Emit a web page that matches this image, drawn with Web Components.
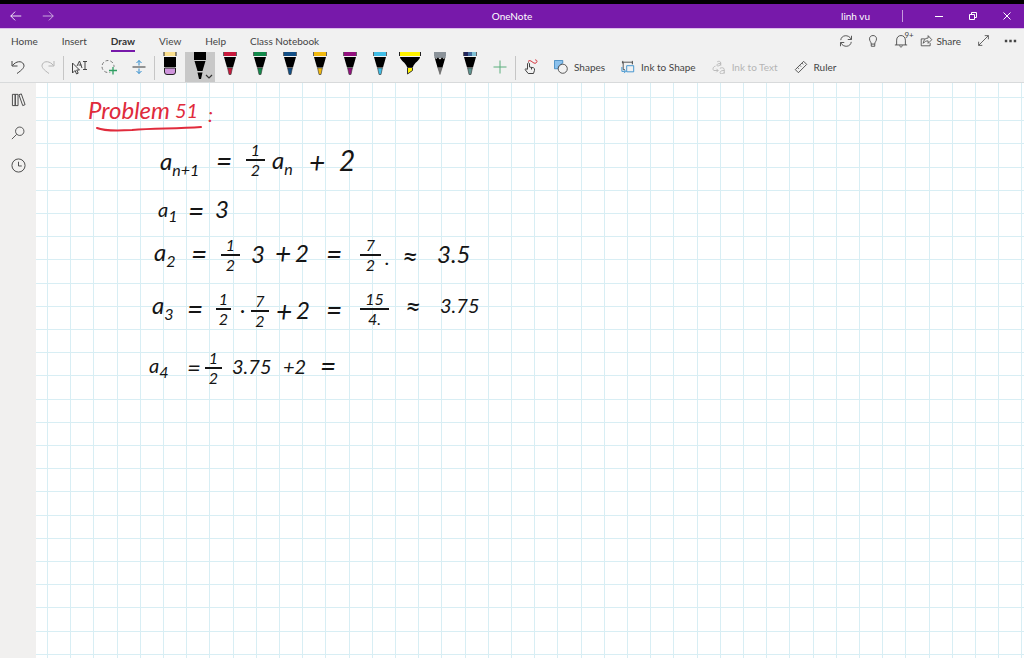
<!DOCTYPE html>
<html lang="en">
<head>
<meta charset="utf-8">
<title>OneNote</title>
<style>
  html, body { height: 100%; margin: 0; }
  body {
    font: 10px/14px Lato, "Open Sans", sans-serif;
    color: #444;
    background: #fff;
    overflow: hidden;
  }
</style>
</head>
<body>
<note-app>
  <title-bar slot="title" user="linh vu">OneNote</title-bar>
  <ribbon-tabs slot="tabs"></ribbon-tabs>
  <draw-toolbar slot="toolbar"></draw-toolbar>
  <side-rail slot="rail"></side-rail>
  <ink-page>
    <ink-text x="52" y="27" size="24" color="#e02b3c">Problem</ink-text>
    <ink-text x="139" y="27" size="20" color="#e02b3c">51</ink-text>
    <ink-text x="172" y="31" size="20" color="#e02b3c">:</ink-text>
    <ink-underline x="60" y="45"></ink-underline>

    <ink-text x="124" y="78" size="24">a<sub>n+1</sub></ink-text>
    <ink-text x="180" y="77" size="28">=</ink-text>
    <ink-fraction x="210" y="77" width="19" top="1" bottom="2"></ink-fraction>
    <ink-text x="236" y="77" size="24">a<sub>n</sub></ink-text>
    <ink-text x="273" y="79" size="28">+</ink-text>
    <ink-text x="303" y="77" size="28">2</ink-text>

    <ink-text x="122" y="126" size="20">a<sub>1</sub></ink-text>
    <ink-text x="152" y="127" size="28">=</ink-text>
    <ink-text x="179" y="126" size="24">3</ink-text>

    <ink-text x="118" y="169" size="24">a<sub>2</sub></ink-text>
    <ink-text x="155" y="170" size="28">=</ink-text>
    <ink-fraction x="185" y="172" width="19" top="1" bottom="2"></ink-fraction>
    <ink-text x="215" y="171" size="24">3</ink-text>
    <ink-text x="239" y="170" size="28">+</ink-text>
    <ink-text x="259" y="170" size="24">2</ink-text>
    <ink-text x="290" y="170" size="28">=</ink-text>
    <ink-fraction x="324" y="172" width="21" top="7" bottom="2"></ink-fraction>
    <ink-text x="349" y="174" size="20">.</ink-text>
    <ink-text x="366" y="173" size="28">≈</ink-text>
    <ink-text x="401" y="171" size="24">3.5</ink-text>

    <ink-text x="116" y="222" size="24">a<sub>3</sub></ink-text>
    <ink-text x="151" y="225" size="28">=</ink-text>
    <ink-fraction x="180" y="226" width="15" top="1" bottom="2"></ink-fraction>
    <ink-text x="204" y="226" size="20">·</ink-text>
    <ink-fraction x="215" y="228" width="18" top="7" bottom="2"></ink-fraction>
    <ink-text x="240" y="228" size="28">+</ink-text>
    <ink-text x="260" y="227" size="24">2</ink-text>
    <ink-text x="290" y="226" size="28">=</ink-text>
    <ink-fraction x="324" y="226" width="29" top="15" bottom="4."></ink-fraction>
    <ink-text x="369" y="223" size="28">≈</ink-text>
    <ink-text x="404" y="222" size="20">3.75</ink-text>

    <ink-text x="113" y="282" size="20">a<sub>4</sub></ink-text>
    <ink-text x="151" y="284" size="24">=</ink-text>
    <ink-fraction x="169" y="285" width="17" top="1" bottom="2"></ink-fraction>
    <ink-text x="196" y="283" size="20">3.75</ink-text>
    <ink-text x="247" y="283" size="20">+2</ink-text>
    <ink-text x="284" y="282" size="28">=</ink-text>
  </ink-page>
</note-app>

<script>
const ICONS = {
  back: `<path d="M2 8h12M7 3 2 8l5 5"/>`,
  forward: `<path d="M2 8h12M9 3l5 5-5 5"/>`,
  minimize: `<path d="M4 8.500h8"/>`,
  restore: `<path d="M4.500 6.500h5v5h-5zM6.500 6.500v-2h5v5h-2"/>`,
  close: `<path d="m4.500 4.500 7 7m0-7-7 7"/>`,
  undo: `<path d="M2 2v5h5.500M2.500 6.500C6 2 11.500 1.500 13.500 5c1.800 3-1.500 6-6.500 9.500"/>`,
  redo: `<path d="M14 2v5H8.500M13.500 6.500C10 2 4.500 1.500 2.500 5c-1.800 3 1.500 6 6.500 9.500"/>`,
  select: `<path d="M1.500 4v10l2.500-2.500 1.600 3.500 1.600-.8L5.700 11H8.500zM6 7l2.500-5 2.500 7M7.500 6h3M12 2.500h4M12 10.500h4M14 2.500v8"/>`,
  lasso: `<circle cx="7" cy="7.500" r="6" stroke="#777" stroke-dasharray="3 2"/><path d="M12 8v7M8.500 11.500h7" stroke="#f1f1f1" stroke-width="4"/><path d="M12 8v7.500M8 11.500h8" stroke="#2f9e62" stroke-width="1.300"/>`,
  space: `<path d="M1.500 8h13" stroke="#888" stroke-width="1.800"/><path d="M8 6.500V1.500M5.500 4 8 1.500 10.500 4M8 9.500v5M5.500 12 8 14.500l2.500-2.500" stroke="#318ccc"/>`,
  plus: `<path d="M8 1.500v13M1.500 8h13" stroke="#5aae7d"/>`,
  touch: `<path d="M4.500 10V4.500q1-1.500 2 0V8l4 .8q1.500.5 1 2.500l-1 3.200H5.200L2 10.500q.5-1.500 2.500 0M8.500 8.500v2"/><path d="M5 2.500c3-3 5 3 8 1.500 2-1.500.5-3.500-1-3" stroke="#d6303a"/>`,
  shapes: `<path d="M.5.5h9.500v3L5 7v3H.5z" fill="#8bc1ed" stroke="#3f87bf"/><circle cx="10" cy="10" r="5.200" fill="#f1f1f1"/>`,
  inkShape: `<path d="M2 1v3M13 1v3M1 2.500h12M2.500 3v8h2M13 3v2"/><path d="M6.500 6.500h8v7h-8zM1 8v5h4M3.500 11 5.500 13l-2 2" stroke="#318ccc"/>`,
  inkText: `<path d="M6 2c2-1 4-.5 4 1.500v3M10 4C4.500 3.500 4.500 8 8 6.500L10 5M9 9.500c2-1 5-1 5 1.500v4.500M14 12c-6-.5-6 5-2 3.500l2-1M4 7c-3 .5-3.500 4-2 5h5M5 10l2 2-2 2"/>`,
  ruler: `<path d="m1.500 11 9.500-9.500 3.500 3.500L5 14.500zM4 8.500l1.500 1.500M6.500 6 8 7.500M9 3.500l1.500 1.500"/>`,
  sync: `<path d="M2 7c.5-6 9-7 12-1M14 9c-.5 6-9 7-12 1M14.300 2v4.300H10M1.700 14V9.700H6"/>`,
  bulb: `<path d="M6 11.500C6 9 4 8.500 4 5.500c0-5 8-5 8 0 0 3-2 3.500-2 6zM6 14h4M6 11.500V14M10 11.500V14"/>`,
  bell: `<path d="M1 12.500h14M3 12.500V7c0-7 10-7 10 0v5.500M6.500 13c0 2.500 3 2.500 3 0"/>`,
  share: `<path d="M6 6H1.500v8.500h11V11"/><path d="M10 2v3C6 5 4.500 7.500 4 11.500 6 9 7.500 8.500 10 8.500v3L14.500 7z"/>`,
  expand: `<path d="M2 14 14 2M9.500 2H14v4.500M2 9.500V14h4.500"/>`,
  more: `<path d="M1 7h3v3H1zM6.500 7h3v3h-3zM12 7h3v3h-3z" fill="currentColor" stroke="none"/>`,
  books: `<path d="M1.500 2.500h3v12h-3zM4.500 2.500h3v12h-3zM8.500 3l2.500-1 4 11.500-2.500 1z"/>`,
  search: `<circle cx="10" cy="6" r="4.800"/><path d="M6.500 9.500 1 15"/>`,
  clock: `<circle cx="8" cy="8" r="7"/><path d="M8 4v4.500h3.500"/>`
};

const icon = (name, size = 16) =>
  `<svg viewBox="0 0 16 16" width="${size}" height="${size}" fill="none" stroke="currentColor" aria-hidden="true">${ICONS[name]}</svg>`;

const BUTTON_RESET = `
  button {
    display: flex;
    align-items: center;
    justify-content: center;
    padding: 0;
    border: none;
    background: none;
    color: inherit;
    font: inherit;
    cursor: pointer;
  }
  svg { flex: none; }
`;

class NoteApp extends HTMLElement {
  constructor() {
    super();
    this.attachShadow({ mode: "open" }).innerHTML = `
      <style>
        :host {
          display: flex;
          flex-direction: column;
          height: 100vh;
        }
        header {
          background: #f1f1f1;
          border-top: 1px solid #dcbcea;
          border-bottom: 1px solid #d8dadb;
        }
        .body {
          display: flex;
          flex: 1;
          min-height: 0;
        }
        main {
          display: flex;
          flex: 1;
        }
      </style>
      <slot name="title"></slot>
      <header>
        <slot name="tabs"></slot>
        <slot name="toolbar"></slot>
      </header>
      <div class="body">
        <slot name="rail"></slot>
        <main><slot></slot></main>
      </div>`;
  }
}

class TitleBar extends HTMLElement {
  constructor() {
    super();
    this.attachShadow({ mode: "open" }).innerHTML = `
      <style>
        ${BUTTON_RESET}
        :host {
          display: grid;
          grid-template-columns: 1fr auto 1fr;
          align-items: center;
          height: 24px;
          border-top: 4px solid #000;
          background: #7719aa;
          color: #fff;
        }
        nav, .window { display: flex; align-items: center; }
        .window { justify-content: flex-end; }
        nav button { width: 32px; height: 24px; }
        nav button + button { opacity: .7; }
        .window button { width: 34px; height: 24px; }
        .rule {
          width: 1px;
          height: 12px;
          margin: 0 19px 0 32px;
          background: #c79bdd;
        }
      </style>
      <nav>
        <button aria-label="Back">${icon("back", 14)}</button>
        <button aria-label="Forward">${icon("forward", 14)}</button>
      </nav>
      <slot></slot>
      <div class="window">
        <span>${this.getAttribute("user")}</span>
        <span class="rule"></span>
        <button aria-label="Minimize">${icon("minimize")}</button>
        <button aria-label="Restore">${icon("restore")}</button>
        <button aria-label="Close">${icon("close")}</button>
      </div>`;
  }
}

class RibbonTabs extends HTMLElement {
  tabs = ["Home", "Insert", "Draw", "View", "Help", "Class Notebook"];

  constructor() {
    super();
    this.attachShadow({ mode: "open" });
    this.render();
  }

  render() {
    const tabs = this.tabs
      .map((tab) => `<button role="tab" aria-selected="${tab === "Draw"}">${tab}</button>`)
      .join("");

    this.shadowRoot.innerHTML = `
      <style>
        ${BUTTON_RESET}
        :host {
          display: flex;
          justify-content: space-between;
          height: 23px;
        }
        .tabs {
          display: flex;
          gap: 24px;
          padding-left: 11px;
        }
        .tabs button {
          border-top: 2px solid transparent;
          border-bottom: 2px solid transparent;
        }
        .tabs button[aria-selected="true"] {
          border-bottom-color: #7719aa;
          color: #333;
          font-weight: 700;
        }
        .actions { display: flex; align-items: center; }
        .actions button { width: 27px; height: 23px; }
        .actions .bell { position: relative; width: 29px; }
        .bell span {
          position: absolute;
          left: 18px;
          top: 1px;
          font-size: 8px;
          line-height: 10px;
        }
        .actions .share {
          width: auto;
          gap: 3px;
          padding: 0 9px 0 5px;
        }
      </style>
      <div class="tabs" role="tablist">${tabs}</div>
      <div class="actions">
        <button aria-label="Sync">${icon("sync", 14)}</button>
        <button aria-label="Tell me">${icon("bulb", 14)}</button>
        <button class="bell" aria-label="Notifications">${icon("bell", 14)}<span>9+</span></button>
        <button class="share">${icon("share", 13)}Share</button>
        <button aria-label="Full screen">${icon("expand", 13)}</button>
        <button aria-label="More">${icon("more", 13)}</button>
      </div>`;
  }
}

class PenTool extends HTMLElement {
  constructor() {
    super();
    this.attachShadow({ mode: "open" }).innerHTML = `
      <style>
        ${BUTTON_RESET}
        :host { display: block; }
        :host([selected]) { background: #c8c8c8; }
      </style>
      <button aria-label="${this.getAttribute("label")}">
        <svg viewBox="0 0 30 30" width="30" height="30">${this.drawing()}</svg>
      </button>`;
  }

  drawing() {
    const color = this.getAttribute("color");
    switch (this.getAttribute("kind")) {
      case "eraser":
        return `<path d="M9 0h12v4H9z" fill="#fbe08e"/>
          <path d="M9 0v4M21 0v4" stroke="#222"/>
          <path d="M9 5h12v10H9z"/>
          <path d="M9.500 16h11v4q0 2.500-2.500 2.500h-6q-2.500 0-2.500-2.500z" fill="#cf95dc" stroke="#222"/>`;
      case "thick":
        return `<path d="M9 0h12v8H9zM9.500 9h11l-3 10h-5zM12.500 20.500h5l-1.500 6.500h-2z"/>
          <path d="m21 23 3 3 3-3" fill="none" stroke="#333" stroke-width="1.200"/>`;
      case "highlighter":
        return `<path d="M5 0h20v4H5z" fill="${color}"/>
          <path d="M4.500 0v4M25.500 0v4" stroke="#222"/>
          <path d="M5 5h20c0 3-6 6-7 10h-6C11 11 5 8 5 5z"/>
          <path d="M12.500 15.500h5v3l-5 3.500z" fill="${color}" stroke="#333"/>`;
      case "pencil":
        return `<path d="M9 0h12v4l-1 2H10L9 4z" fill="#8a9299"/>
          <path d="m9.500 5 1.500 2 2-1.500 2 2 2-2 2 1.500 1.500-2L17.500 15.500h-5z"/>
          <path d="M12.800 15.500h4.400L15 22.500z" fill="#777" stroke="#444" stroke-width=".5"/>`;
      case "galaxy":
        return `<path d="M9 0h4v4H9z" fill="#23265c"/>
          <path d="M13 0h4v4h-4z" fill="#41699c"/>
          <path d="M17 0h4v4h-4z" fill="#7fc0d4"/>
          <path d="M8.500 0v4M21.500 0v4" stroke="#222" stroke-width=".7"/>
          <path d="M9 5h12l-3 10.500h-6z"/>
          <path d="M12.600 16h4.800L16 22.500h-2z" fill="#5e9490" stroke="#333" stroke-width=".6"/>`;
      default:
        return `<path d="M9 0h12v4H9z" fill="${color}"/>
          <path d="M8.500 0v4M21.500 0v4" stroke="#222" stroke-width=".7"/>
          <path d="M9 5h12l-3 10.500h-6z"/>
          <path d="M12.600 16h4.800L16 22.500h-2z" fill="${color}" stroke="#333" stroke-width=".6"/>`;
    }
  }
}

class DrawToolbar extends HTMLElement {
  constructor() {
    super();
    this.attachShadow({ mode: "open" }).innerHTML = `
      <style>
        ${BUTTON_RESET}
        :host {
          display: flex;
          height: 30px;
          padding-left: 3px;
        }
        .tool { width: 30px; }
        .labelled { gap: 6px; padding: 0 8px; }
        .rule {
          width: 1px;
          margin: 4px 0 2px;
          background: #c6c6c6;
        }
        button:disabled { color: #b5b5b5; }
      </style>
      <button class="tool" aria-label="Undo">${icon("undo")}</button>
      <button class="tool" aria-label="Redo" disabled>${icon("redo")}</button>
      <span class="rule"></span>
      <button class="tool" aria-label="Select objects or text">${icon("select")}</button>
      <button class="tool" aria-label="Lasso select">${icon("lasso")}</button>
      <button class="tool" aria-label="Insert space">${icon("space")}</button>
      <span class="rule"></span>
      <pen-tool kind="eraser" label="Eraser"></pen-tool>
      <pen-tool kind="thick" label="Black pen" selected></pen-tool>
      <pen-tool color="#c8193c" label="Red pen"></pen-tool>
      <pen-tool color="#138a4b" label="Green pen"></pen-tool>
      <pen-tool color="#124f86" label="Blue pen"></pen-tool>
      <pen-tool color="#f2b90f" label="Yellow pen"></pen-tool>
      <pen-tool color="#93117e" label="Purple pen"></pen-tool>
      <pen-tool color="#40bde6" label="Light blue pen"></pen-tool>
      <pen-tool kind="highlighter" color="#fff200" label="Highlighter"></pen-tool>
      <pen-tool kind="pencil" label="Pencil"></pen-tool>
      <pen-tool kind="galaxy" label="Galaxy pen"></pen-tool>
      <button class="tool" aria-label="Add pen">${icon("plus")}</button>
      <span class="rule"></span>
      <button class="tool" aria-label="Draw with touch">${icon("touch")}</button>
      <button class="labelled">${icon("shapes", 14)}Shapes</button>
      <button class="labelled">${icon("inkShape", 14)}Ink to Shape</button>
      <button class="labelled" disabled>${icon("inkText", 14)}Ink to Text</button>
      <button class="labelled">${icon("ruler", 14)}Ruler</button>`;
  }
}

class SideRail extends HTMLElement {
  constructor() {
    super();
    this.attachShadow({ mode: "open" }).innerHTML = `
      <style>
        ${BUTTON_RESET}
        :host {
          display: block;
          width: 36px;
          background: #f1f0ef;
        }
        button { width: 36px; height: 33px; }
      </style>
      <button aria-label="Notebooks">${icon("books", 15)}</button>
      <button aria-label="Search">${icon("search", 14)}</button>
      <button aria-label="Recent notes">${icon("clock", 15)}</button>`;
  }
}

// Ruled paper. One tile holds five squares of 23 or 24px.
class InkPage extends HTMLElement {
  constructor() {
    super();
    const stops = [0, 23, 46, 70, 93]
      .map((at) => `transparent ${at}px, #d8eef4 ${at}px ${at + 1}px, transparent ${at + 1}px`)
      .join(", ");

    this.attachShadow({ mode: "open" }).innerHTML = `
      <style>
        :host {
          display: block;
          position: relative;
          flex: 1;
          overflow: hidden;
          color: #151515;
          background-color: #fff;
          background-image:
            linear-gradient(to right, ${stops}),
            linear-gradient(to bottom, ${stops});
          background-size: 116px 116px;
          background-position: 11px 14px;
        }
      </style>
      <slot></slot>`;
  }
}

// Anything written on the page sits at the point where it was put down.
class InkItem extends HTMLElement {
  constructor() {
    super();
    this.attachShadow({ mode: "open" }).innerHTML = `
      <style>
        :host {
          position: absolute;
          left: ${this.getAttribute("x")}px;
          top: ${this.getAttribute("y")}px;
          transform: translateY(-50%);
          font-family: Lato, "Open Sans", sans-serif;
          font-style: italic;
          white-space: nowrap;
        }
        ${this.styles()}
      </style>
      ${this.markup()}`;
  }
}

class InkText extends InkItem {
  styles() {
    return `
      :host {
        color: ${this.getAttribute("color") || "inherit"};
        font-size: ${this.getAttribute("size")}px;
        line-height: 24px;
      }
      ::slotted(sub) {
        font-size: 16px;
        line-height: 0;
      }`;
  }

  markup() {
    return `<slot></slot>`;
  }
}

class InkFraction extends InkItem {
  styles() {
    return `
      :host {
        display: flex;
        flex-direction: column;
        width: ${this.getAttribute("width")}px;
        font-size: 16px;
        line-height: 16px;
        text-align: center;
      }
      .top {
        padding-bottom: 1px;
        border-bottom: 2px solid;
      }
      .bottom { padding-top: 1px; }`;
  }

  markup() {
    return `
      <span class="top">${this.getAttribute("top")}</span>
      <span class="bottom">${this.getAttribute("bottom")}</span>`;
  }
}

class InkUnderline extends InkItem {
  styles() {
    return `svg { display: block; }`;
  }

  markup() {
    return `
      <svg width="106" height="8" fill="none" stroke="#e02b3c" stroke-width="2" stroke-linecap="round" aria-hidden="true">
        <path d="M1 4c7 3 18 3 35 2C58 4 80 5 105 3"/>
      </svg>`;
  }
}

customElements.define("note-app", NoteApp);
customElements.define("title-bar", TitleBar);
customElements.define("ribbon-tabs", RibbonTabs);
customElements.define("pen-tool", PenTool);
customElements.define("draw-toolbar", DrawToolbar);
customElements.define("side-rail", SideRail);
customElements.define("ink-page", InkPage);
customElements.define("ink-text", InkText);
customElements.define("ink-fraction", InkFraction);
customElements.define("ink-underline", InkUnderline);
</script>
</body>
</html>
